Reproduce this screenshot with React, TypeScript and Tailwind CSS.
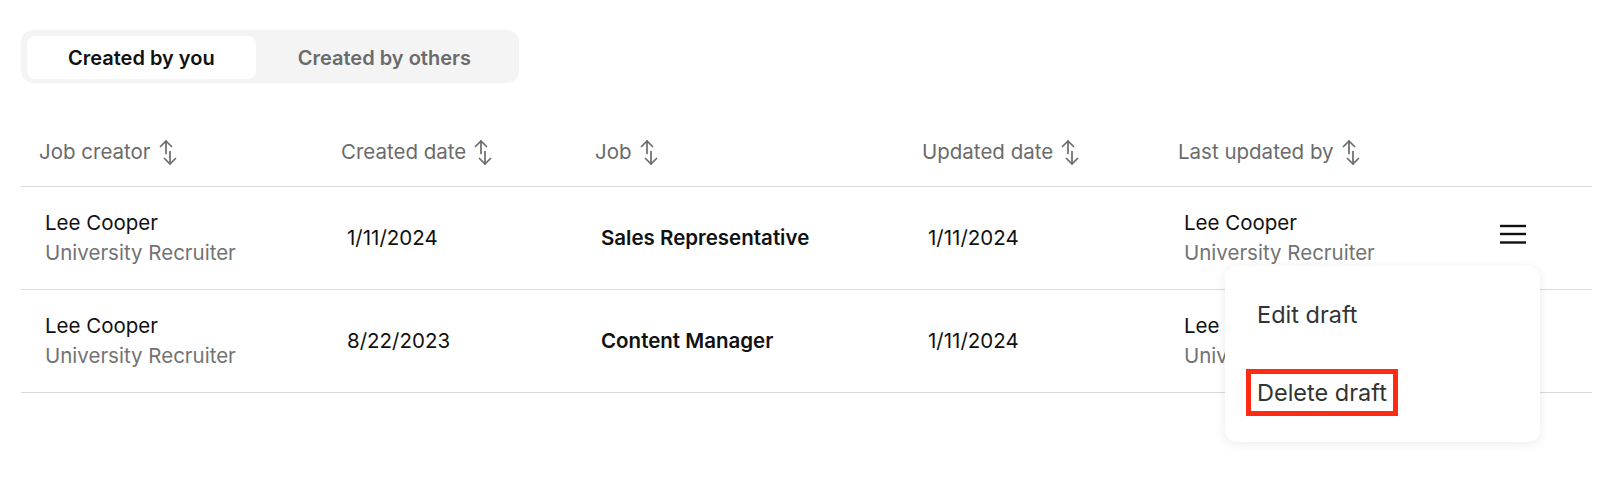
const rows = [
    { creator: "Lee Cooper", role: "University Recruiter", created: "1/11/2024", job: "Sales Representative", updated: "1/11/2024", by: "Lee Cooper", byRole: "University Recruiter" },
    { creator: "Lee Cooper", role: "University Recruiter", created: "8/22/2023", job: "Content Manager", updated: "1/11/2024", by: "Lee Cooper", byRole: "University Recruiter" },
];

const headers = ["Job creator", "Created date", "Job", "Updated date", "Last updated by"];

const SortIcon = () => (
    <svg width="18" height="25" viewBox="0 0 18 25" fill="none" stroke="#6b6b6b" strokeWidth="1.7" strokeLinecap="round" strokeLinejoin="round">
        <path d="M1.5 6.5 7 1 12.5 6.5" />
        <path d="M7 1V13.5" />
        <path d="M5.5 18.5 11 24 16.5 18.5" />
        <path d="M11 11.5V24" />
    </svg>
);

const MenuIcon = () => (
    <svg width="28" height="20" viewBox="0 0 28 20" fill="none" stroke="#111" strokeWidth="2.4">
        <path d="M1 2h26" />
        <path d="M1 10h26" />
        <path d="M1 18.5h26" />
    </svg>
);

const cols = "grid grid-cols-[302px_254px_327px_256px_320px_1fr]";

export default function App() {
    return (
        <div className="relative min-h-[484px] bg-white px-[21px] pt-[30px] font-['Inter',sans-serif]">
            <div className="flex w-[498px] rounded-xl bg-[#f4f4f4] p-[6px] pb-[4px]">
                <button className="h-[43px] rounded-lg bg-white px-[41px] text-[20px] font-semibold text-[#111]">
                    Created by you
                </button>
                <button className="h-[43px] flex-1 rounded-lg px-[41px] text-[20px] font-semibold text-[#6b6b6b]">
                    Created by others
                </button>
            </div>

            <div className="mt-[36px] w-[1571px]">
                <div className={`${cols} h-[68px] items-center border-b border-[#d9d9d9]`}>
                    {headers.map((h) => (
                        <div key={h} className="flex items-center gap-[8px] pl-[18px] text-[20.5px] text-[#6b6b6b]">
                            {h}
                            <SortIcon />
                        </div>
                    ))}
                    <div />
                </div>

                {rows.map((r, i) => (
                    <div key={i} className={`${cols} h-[103px] items-center border-b border-[#d9d9d9] text-[20.5px]`}>
                        <div className="pl-[24px] leading-[30px]">
                            <div className="text-[#111]">{r.creator}</div>
                            <div className="text-[#737373]">{r.role}</div>
                        </div>
                        <div className="pl-[24px] text-[#111]">{r.created}</div>
                        <div className="pl-[24px] font-semibold text-[#111]">{r.job}</div>
                        <div className="pl-[24px] text-[#111]">{r.updated}</div>
                        <div className="pl-[24px] leading-[30px]">
                            <div className="text-[#111]">{r.by}</div>
                            <div className="text-[#737373]">{r.byRole}</div>
                        </div>
                        <div className="pl-[19px]">
                            {i === 0 && (
                                <div className="mb-[8px]">
                                    <MenuIcon />
                                </div>
                            )}
                        </div>
                    </div>
                ))}
            </div>

            <div className="absolute left-[1225px] top-[266px] flex w-[315px] flex-col rounded-xl bg-white pb-[26px] pt-[34px] shadow-[0_2px_12px_rgba(0,0,0,0.08)]">
                <div className="px-[32px] text-[23.5px] leading-[29px] text-[#333]">Edit draft</div>
                <div className="ml-[21px] mt-[40px] w-fit border-[5px] border-[#ff2a12] px-[6px] py-[4px] text-[23.5px] leading-[29px] text-[#333]">
                    Delete draft
                </div>
            </div>
        </div>
    );
}
